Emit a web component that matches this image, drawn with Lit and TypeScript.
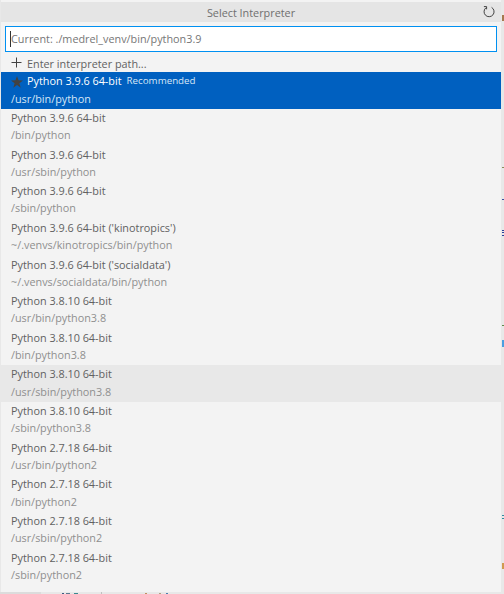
import { LitElement, html, css } from "lit";
import { customElement } from "lit/decorators.js";

const rows: [string, string][] = [
  ["Python 3.9.6 64-bit", "/bin/python"],
  ["Python 3.9.6 64-bit", "/usr/sbin/python"],
  ["Python 3.9.6 64-bit", "/sbin/python"],
  ["Python 3.9.6 64-bit ('kinotropics')", "~/.venvs/kinotropics/bin/python"],
  ["Python 3.9.6 64-bit ('socialdata')", "~/.venvs/socialdata/bin/python"],
  ["Python 3.8.10 64-bit", "/usr/bin/python3.8"],
  ["Python 3.8.10 64-bit", "/bin/python3.8"],
  ["Python 3.8.10 64-bit", "/usr/sbin/python3.8"],
  ["Python 3.8.10 64-bit", "/sbin/python3.8"],
  ["Python 2.7.18 64-bit", "/usr/bin/python2"],
  ["Python 2.7.18 64-bit", "/bin/python2"],
  ["Python 2.7.18 64-bit", "/usr/sbin/python2"],
  ["Python 2.7.18 64-bit", "/sbin/python2"],
];

/* Slivers of the editor that stay visible around the palette: left, top, width, height, colour. */
const slivers: [number, number, number, number, string][] = [
  [502, 15, 2, 6, "#a5794f"],
  [502, 167, 2, 1, "#8a8a5a"],
  [502, 199, 2, 1, "#3a4fa0"],
  [502, 230, 2, 1, "#2a3f9a"],
  [502, 232, 2, 1, "#2a3f9a"],
  [502, 235, 2, 1, "#2a3f9a"],
  [502, 325, 2, 1, "#5f8a4a"],
  [502, 340, 2, 7, "#4a9fe0"],
  [502, 515, 2, 1, "#2f8aa0"],
  [502, 518, 2, 1, "#2f8aa0"],
  [502, 563, 2, 6, "#d09a50"],
  [0, 592, 41, 2, "#dcdcdc"],
  [101, 592, 1, 2, "#c0c0c0"],
  [62, 593, 2, 1, "#3a5a80"],
  [66, 593, 4, 1, "#5a7a90"],
  [74, 593, 4, 1, "#3a8a90"],
  [145, 593, 2, 1, "#c09060"],
  [159, 593, 2, 1, "#b0a080"],
  [166, 593, 2, 1, "#4a80b0"],
];

@customElement("app-root")
export class AppRoot extends LitElement {
  static styles = css`
    :host {
      display: block;
      position: relative;
      width: 504px;
      height: 594px;
      overflow: hidden;
      background: #e8e8e8;
      font-family: "Open Sans", "Noto Sans", sans-serif;
      font-size: 10.83px;
      color: #616161;
    }
    .sliver {
      position: absolute;
    }
    .palette {
      width: 500px;
      margin-left: 1px;
      padding-top: 2px;
      height: 590px;
      background: #f3f3f3;
      display: flex;
      flex-direction: column;
    }
    .title {
      height: 20px;
      background: #e5e5e5;
      display: flex;
      align-items: center;
      justify-content: center;
      position: relative;
      color: #6f6f6f;
    }
    .refresh {
      position: absolute;
      right: 5px;
      top: 3px;
      width: 14px;
      height: 14px;
    }
    .box {
      margin: 4px 4px 2px 4px;
      height: 26px;
      box-sizing: border-box;
      border: 1px solid #0090f1;
      background: #fff;
      display: flex;
      align-items: center;
      padding: 0 0 2px 4px;
      color: #767676;
    }
    .caret {
      width: 1px;
      height: 16px;
      background: #333;
      margin-top: 2px;
    }
    .enter {
      height: 18px;
      display: flex;
      align-items: center;
      padding-left: 10px;
      gap: 4px;
    }
    .row {
      height: 36.67px;
      padding-left: 10px;
      display: flex;
      flex-direction: column;
    }
    .line {
      height: 18.33px;
      line-height: 18.33px;
      white-space: nowrap;
    }
    .sub {
      color: #8f8f8f;
      margin-top: -1.05px;
    }
    .row.sel {
      background: #0060c0;
      color: #fff;
      height: 36.9px;
    }
    .row.sel .sub {
      color: #d6e6f6;
      margin-top: -0.4px;
    }
    .head {
      display: flex;
      align-items: center;
      gap: 4px;
    }
    .head svg {
      margin-top: 1px;
    }
    .rec {
      font-size: 9.75px;
      color: #d6e6f6;
      margin-left: 1px;
    }
    .row.hover {
      background: #e8e8e8;
    }
    svg {
      display: block;
      flex: none;
    }
  `;

  render() {
    return html`
      <div class="palette">
        <div class="title">
          Select Interpreter
          <svg class="refresh" viewBox="0 0 14 14" fill="none" stroke="#424242" stroke-width="1">
            <path d="M4.2 2.6A5 5 0 1 0 9.6 2.4" />
            <path d="M1.9 1.6H4.6V4.3" />
          </svg>
        </div>
        <div class="box"><span class="caret"></span>Current: ./medrel_venv/bin/python3.9</div>
        <div class="enter">
          <svg width="12" height="12" viewBox="0 0 12 12" stroke="#424242" stroke-width="1">
            <path d="M5.5 0.5V10.5M0.5 5.5H10.5" />
          </svg>
          Enter interpreter path...
        </div>
        <div class="row sel">
          <div class="line head">
            <svg width="12" height="12" viewBox="0 0 12 12">
              <path fill="#424242" d="M6 0l1.5 4.3L12 4.5 8.4 7.2 9.7 11.7 6 9.1 2.3 11.7 3.6 7.2 0 4.5l4.5-.2z" />
            </svg>
            Python 3.9.6 64-bit<span class="rec">Recommended</span>
          </div>
          <div class="line sub">/usr/bin/python</div>
        </div>
        ${rows.map(
          (r, i) => html`<div class="row ${i === 7 ? "hover" : ""}">
            <div class="line">${r[0]}</div>
            <div class="line sub">${r[1]}</div>
          </div>`
        )}
      </div>
      ${slivers.map(
        ([x, y, w, h, c]) =>
          html`<div class="sliver" style="left:${x}px;top:${y}px;width:${w}px;height:${h}px;background:${c}"></div>`
      )}
    `;
  }
}
